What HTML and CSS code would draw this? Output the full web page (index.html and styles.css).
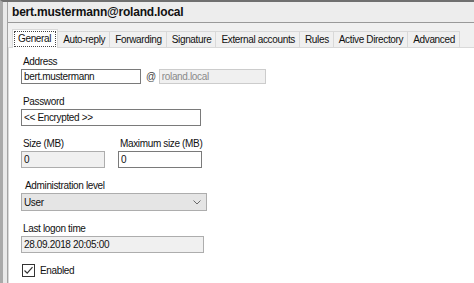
FILE: index.html
```html
<!DOCTYPE html>
<html lang="en">
<head>
    <meta charset="UTF-8" />
    <meta name="viewport" content="width=device-width, initial-scale=1.0" />
    <title>Mailbox - bert.mustermann</title>
    <link rel="stylesheet" href="styles.css">
</head>
<body>
    <div class="frame">
        <div class="pane">
            <header class="title-bar">
                <h1>bert.mustermann@roland.local</h1>
            </header>
            <nav class="tabs">
                <div class="tab active"><span class="focus">General</span></div>
                <div class="tab">Auto-reply</div>
                <div class="tab">Forwarding</div>
                <div class="tab">Signature</div>
                <div class="tab">External accounts</div>
                <div class="tab">Rules</div>
                <div class="tab">Active Directory</div>
                <div class="tab">Advanced</div>
            </nav>
            <section class="panel">
                <div class="field">
                    <label for="user">Address</label>
                    <div class="row">
                        <input class="text w-user" id="user" value="bert.mustermann" />
                        <span class="at">@</span>
                        <input class="text w-domain off" value="roland.local" disabled />
                    </div>
                </div>
                <div class="field">
                    <label for="password">Password</label>
                    <input class="text w-password tall" id="password" value="&lt;&lt; Encrypted &gt;&gt;" />
                </div>
                <div class="size-row">
                    <div class="field">
                        <label>Size (MB)</label>
                        <input class="text w-size tall grey" value="0" readonly />
                    </div>
                    <div class="field">
                        <label for="maxsize">Maximum size (MB)</label>
                        <input class="text w-size tall" id="maxsize" value="0" />
                    </div>
                </div>
                <div class="field">
                    <label class="combo-label">Administration level</label>
                    <div class="combo">
                        <span>User</span>
                        <svg width="8" height="5" viewBox="0 0 8 5"><path d="M0.5 0.5 L4 4 L7.5 0.5" fill="none" stroke="#6a6a6a" stroke-width="1"/></svg>
                    </div>
                </div>
                <div class="field">
                    <label>Last logon time</label>
                    <input class="text w-logon tall grey" value="28.09.2018 20:05:00" readonly />
                </div>
                <div class="check-row">
                    <span class="checkbox">
                        <svg width="11" height="11" viewBox="0 0 11 11"><path d="M1.5 5.5 L4.2 8.2 L9.5 2.2" fill="none" stroke="#333" stroke-width="1.2"/></svg>
                    </span>
                    <span>Enabled</span>
                </div>
            </section>
        </div>
    </div>
</body>
</html>
```

FILE: styles.css
```css
/* Reset and general styles */
* {
    box-sizing: border-box;
}
body {
    margin: 0;
    padding: 0;
    overflow: hidden;
    font-family: "Liberation Sans", Arial, sans-serif;
    font-size: 10px;
    letter-spacing: -0.35px;
    color: #111;
}

/* Window frame */
.frame {
    height: 100vh;
    border-top: 2px solid #707070;
    border-left: 3px solid #a9a9a9;
    padding-left: 4px;
    background-color: #e9e9e9;
}
.pane {
    height: 100%;
    display: flex;
    flex-direction: column;
    border-left: 1px solid #a3a3a3;
    background-color: #f0f0f0;
}

/* Title bar */
.title-bar {
    height: 21px;
    padding-left: 4px;
    border-bottom: 1px solid #999;
    background-color: #ededed;
}
.title-bar h1 {
    margin: 0;
    font-size: 12px;
    line-height: 20px;
    letter-spacing: -0.2px;
    font-weight: bold;
    color: #111;
}

/* Tabs */
.tabs {
    height: 24px;
    display: flex;
    align-items: flex-end;
    padding-left: 4px;
}
.tab {
    height: 16px;
    line-height: 15px;
    padding: 0 4px 0 5px;
    border-top: 1px solid #d9d9d9;
    border-right: 1px solid #d9d9d9;
    background-color: #f0f0f0;
    white-space: nowrap;
}
.tab.active {
    position: relative;
    z-index: 1;
    height: 19px;
    margin-bottom: -1px;
    padding: 1px 1px 0;
    border-left: 1px solid #d9d9d9;
    background-color: white;
}
.focus {
    display: block;
    line-height: 14px;
    padding: 0 4px 0 3px;
    border: 1px dotted #444;
}

/* Tab page */
.panel {
    flex: 1;
    display: flex;
    flex-direction: column;
    gap: 12px;
    padding: 8px 0 0 12px;
    border-top: 1px solid #d9d9d9;
    border-left: 1px solid #d9d9d9;
    background-color: white;
}
.field label {
    display: block;
    line-height: 12px;
    margin-bottom: 1px;
    padding-left: 2px;
}
.field .combo-label {
    padding-left: 4px;
}
.row {
    display: flex;
    align-items: center;
}
.at {
    margin: 0 3px 0 5px;
    color: #444;
}
.text {
    height: 15px;
    margin: 0;
    padding: 0 2px;
    border: 1px solid #7a7a7a;
    font-family: inherit;
    font-size: 10px;
    letter-spacing: -0.35px;
    color: #111;
    background-color: white;
    outline: none;
}
.text.tall {
    height: 17px;
}
.text.off {
    border-color: #cccccc;
    background-color: #f0f0f0;
    color: #8a8a8a;
}
.text.grey {
    border-color: #adadad;
    background-color: #f0f0f0;
}
.w-user { width: 120px; }
.w-domain { width: 107px; }
.w-password { width: 180px; }
.w-size { width: 84px; }
.w-logon { width: 183px; }

.size-row {
    display: flex;
    gap: 13px;
}

/* Combo box */
.combo {
    width: 186px;
    height: 18px;
    display: flex;
    justify-content: space-between;
    align-items: center;
    padding: 0 5px 0 2px;
    border: 1px solid #adadad;
    background-color: #e5e5e5;
}

/* Checkbox */
.check-row {
    display: flex;
    align-items: center;
    gap: 5px;
    margin-left: 1px;
    margin-top: -1px;
}
.checkbox {
    width: 13px;
    height: 13px;
    display: flex;
    justify-content: center;
    align-items: center;
    border: 1px solid #333;
    background-color: white;
}
```
